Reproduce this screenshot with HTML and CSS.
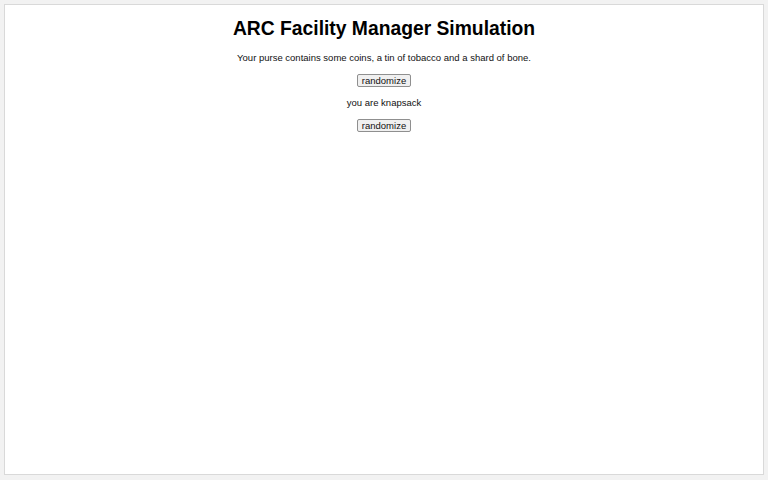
FILE: index.html
```html
<!DOCTYPE html>
<html lang="en">
<head>
  <meta charset="UTF-8" />
  <title>ARC Facility Manager Simulation</title>
  <link rel="stylesheet" href="styles.css">
</head>
<body>
  <div class="panel">
    <h1>ARC Facility Manager Simulation</h1>
    <p class="line">Your purse contains some coins, a tin of tobacco and a shard of bone.</p>
    <button class="btn">randomize</button>
    <p class="line">you are knapsack</p>
    <button class="btn">randomize</button>
  </div>
</body>
</html>
```

FILE: styles.css
```css
* {
  box-sizing: border-box;
  margin: 0;
  padding: 0;
}

body {
  background-color: #f2f2f2;
  font-family: 'Liberation Sans', Arial, sans-serif;
  padding: 4px 4px 5px 4px;
  height: 480px;
}

.panel {
  background-color: #fff;
  border: 1px solid #d9d9d9;
  height: 100%;
  display: flex;
  flex-direction: column;
  align-items: center;
  padding-top: 13px;
}

.panel h1 {
  font-size: 19.3px;
  font-weight: bold;
  color: #000;
  margin-bottom: 12px;
}

.line {
  font-size: 9.5px;
  color: #111;
  margin-bottom: 11px;
}

.btn {
  font-family: 'Liberation Sans', Arial, sans-serif;
  font-size: 9.5px;
  line-height: 11px;
  padding: 0 4px;
  color: #111;
  background-color: #f0f0f0;
  border: 1px solid #8f8f8f;
  border-radius: 2px;
  margin-bottom: 10px;
}
```
